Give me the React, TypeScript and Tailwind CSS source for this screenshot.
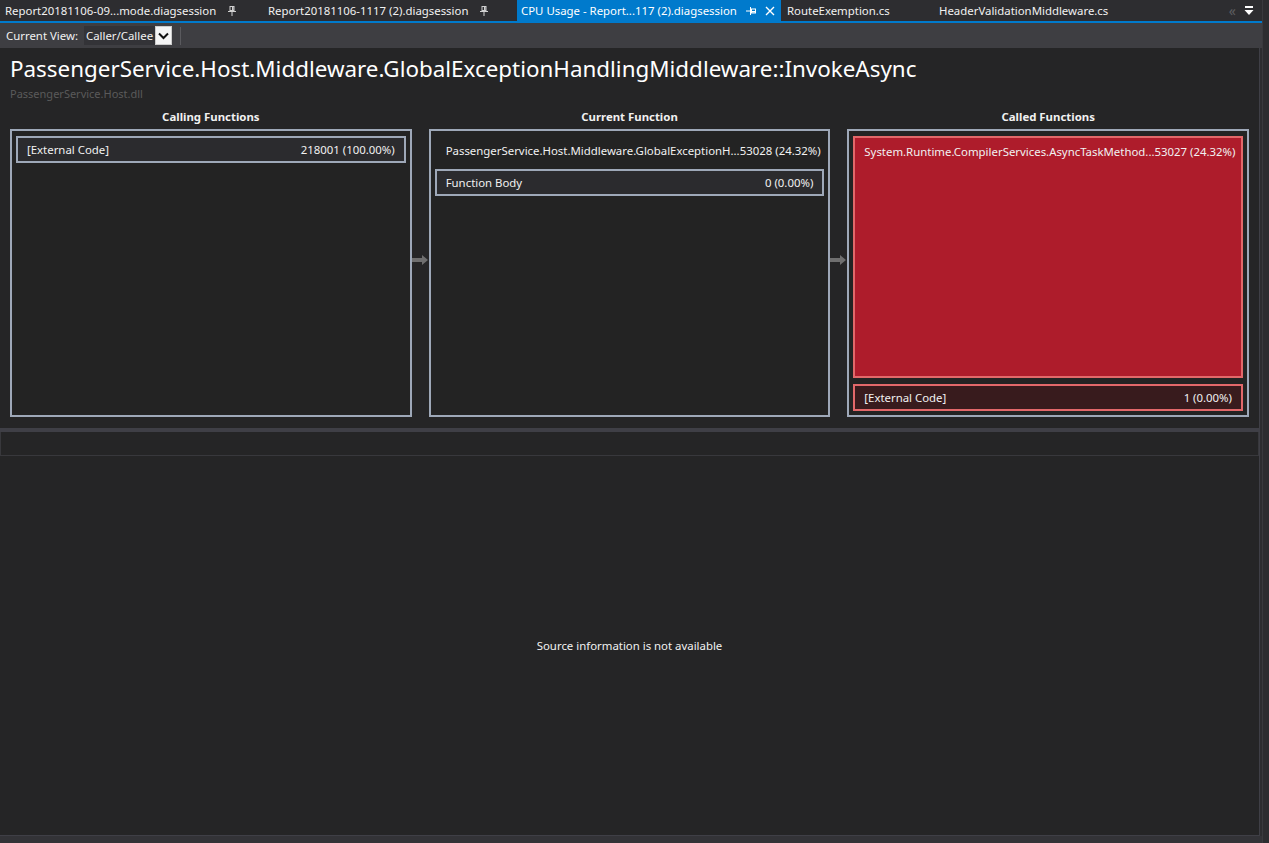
import React from "react";

const font = { fontFamily: '"Noto Sans", "Open Sans", sans-serif' };

function PinV() {
  return (
    <svg width="8" height="10" viewBox="0 0 8 10" className="shrink-0">
      <rect x="2" y="0.5" width="4" height="4" fill="none" stroke="#d0d0d0" strokeWidth="1" />
      <rect x="0" y="5" width="8" height="1" fill="#d0d0d0" />
      <rect x="3.5" y="6" width="1" height="4" fill="#d0d0d0" />
      <rect x="4" y="1" width="1.5" height="3.5" fill="#d0d0d0" />
    </svg>
  );
}

function PinH() {
  return (
    <svg width="10" height="8" viewBox="0 0 10 8" className="shrink-0">
      <rect x="0" y="3.5" width="4" height="1" fill="#ffffff" />
      <rect x="4" y="0" width="1" height="8" fill="#ffffff" />
      <rect x="5.5" y="2" width="4" height="4" fill="none" stroke="#ffffff" strokeWidth="1" />
      <rect x="6" y="4" width="3.5" height="1.5" fill="#ffffff" />
    </svg>
  );
}

function CloseX() {
  return (
    <svg width="10" height="10" viewBox="0 0 10 10" className="shrink-0">
      <path d="M1 1 L9 9 M9 1 L1 9" stroke="#ffffff" strokeWidth="1.4" />
    </svg>
  );
}

function Arrow() {
  return (
    <div className="w-[17px] flex justify-center pt-[125px]">
      <svg width="17" height="12" viewBox="0 0 17 12">
        <rect x="0" y="4" width="10" height="4" fill="#6f6f6f" />
        <path d="M10 1 L16 6 L10 11 Z" fill="#6f6f6f" />
      </svg>
    </div>
  );
}

function Row({ name, value, cls }: { name: string; value: string; cls?: string }) {
  return (
    <div
      className={
        "h-[27px] flex items-center justify-between pl-[9px] pr-[9px] text-[11.4px] text-[#f1f1f1] border-2 " +
        (cls ?? "border-[#9ea8b8] bg-[#2b2b2e]")
      }
    >
      <span>{name}</span>
      <span>{value}</span>
    </div>
  );
}

function Panel({ title, children }: { title: string; children: React.ReactNode }) {
  return (
    <div className="flex-1 flex flex-col min-w-0">
      <div className="h-[21px] pb-[3px] flex items-center justify-center text-[11.4px] font-bold text-[#f1f1f1]">{title}</div>
      <div className="h-[288px] border-2 border-[#9ea8b8] bg-[#232323] p-[4px] pt-[5px] flex flex-col">{children}</div>
    </div>
  );
}

export default function App() {
  return (
    <div className="w-[1269px] h-[843px] bg-[#2d2d30] flex overflow-hidden whitespace-nowrap" style={font}>
      <div className="w-[1262px] flex flex-col">
        {/* Tab bar */}
        <div className="h-[21px] flex items-stretch text-[11.4px] text-[#f1f1f1]">
          <div className="flex items-center pl-[5px] w-[263px]">
            <span>Report20181106-09...mode.diagsession</span>
            <span className="ml-[12px]"><PinV /></span>
          </div>
          <div className="flex items-center w-[254px] pl-[5px]">
            <span>Report20181106-1117 (2).diagsession</span>
            <span className="ml-[12px]"><PinV /></span>
          </div>
          <div className="flex items-center bg-[#007acc] w-[264px] pl-[4px] text-white">
            <span>CPU Usage - Report...117 (2).diagsession</span>
            <span className="ml-[9px]"><PinH /></span>
            <span className="ml-[9px]"><CloseX /></span>
          </div>
          <div className="flex items-center w-[152px] pl-[6px]">
            <span>RouteExemption.cs</span>
          </div>
          <div className="flex items-center pl-[6px]">
            <span>HeaderValidationMiddleware.cs</span>
          </div>
          <div className="flex-1" />
          <div className="flex items-center gap-[8px] pr-[8px]">
            <span className="text-[#5d5d60] text-[14px] leading-none">«</span>
            <svg width="10" height="10" viewBox="0 0 10 10">
              <rect x="1" y="0" width="8" height="2" fill="#ffffff" />
              <path d="M0.5 4 L9.5 4 L5 9 Z" fill="#ffffff" />
            </svg>
          </div>
        </div>
        <div className="h-[2px] bg-[#007acc]" />
        {/* Toolbar */}
        <div className="h-[25px] bg-[#3e3e42] flex items-center text-[11.4px] text-[#f1f1f1] pl-[6px]">
          <span>Current View:</span>
          <div className="ml-[6px] h-[19px] flex items-stretch bg-[#333337]">
            <span className="flex items-center px-[2px]">Caller/Callee</span>
            <div className="w-[17px] bg-[#f5f5f5] flex items-center justify-center border border-[#cccccc]">
              <svg width="11" height="8" viewBox="0 0 11 8">
                <path d="M1 1.5 L5.5 6 L10 1.5" stroke="#111111" strokeWidth="2" fill="none" />
              </svg>
            </div>
          </div>
          <div className="ml-[8px] w-px h-[18px] bg-[#5a5a5e]" />
        </div>
        {/* Content */}
        <div className="flex-1 bg-[#252526] border-r border-b border-[#3f3f46] flex flex-col w-[1260px]">
          <div className="px-[10px] pt-[6px]">
            <div className="text-[22.4px] leading-[30px] text-[#ffffff]">
              PassengerService.Host.Middleware.GlobalExceptionHandlingMiddleware::InvokeAsync
            </div>
            <div className="text-[11px] leading-[20px] text-[#5a5a5a]">PassengerService.Host.dll</div>
          </div>
          <div className="flex px-[10px] mt-[4px]">
            <Panel title="Calling Functions">
              <Row name="[External Code]" value="218001 (100.00%)" />
            </Panel>
            <div className="flex flex-col">
              <div className="h-[21px]" />
              <div className="h-[288px] flex"><Arrow /></div>
            </div>
            <Panel title="Current Function">
              <div className="h-[33px] flex items-center justify-between pl-[11px] pr-[11px] pb-[3px] text-[11.4px] text-[#f1f1f1]">
                <span>PassengerService.Host.Middleware.GlobalExceptionH...</span>
                <span>53028 (24.32%)</span>
              </div>
              <Row name="Function Body" value="0 (0.00%)" />
            </Panel>
            <div className="flex flex-col">
              <div className="h-[21px]" />
              <div className="h-[288px] flex"><Arrow /></div>
            </div>
            <Panel title="Called Functions">
              <div className="flex-1 bg-[#ae1c2b] border-2 border-[#e2686a] px-[9px] pt-[5px] text-[11.4px] text-[#f1f1f1]">
                System.Runtime.CompilerServices.AsyncTaskMethod...53027 (24.32%)
              </div>
              <div className="mt-[6px]">
                <Row name="[External Code]" value="1 (0.00%)" cls="border-[#e2686a] bg-[#381b1d]" />
              </div>
            </Panel>
          </div>
          <div className="mt-[11px] h-[4px] bg-[#3f3f46]" />
          <div className="h-[24px] border border-t-0 border-[#38383c] bg-[#252526]" />
          <div className="flex-1 flex items-center justify-center text-[11.4px] text-[#f1f1f1]">
            Source information is not available
          </div>
        </div>
        <div className="h-[7px] bg-[#333337]" />
      </div>
      <div className="flex-1 bg-[#2d2d30] border-l border-[#3a3a3e]" />
    </div>
  );
}
